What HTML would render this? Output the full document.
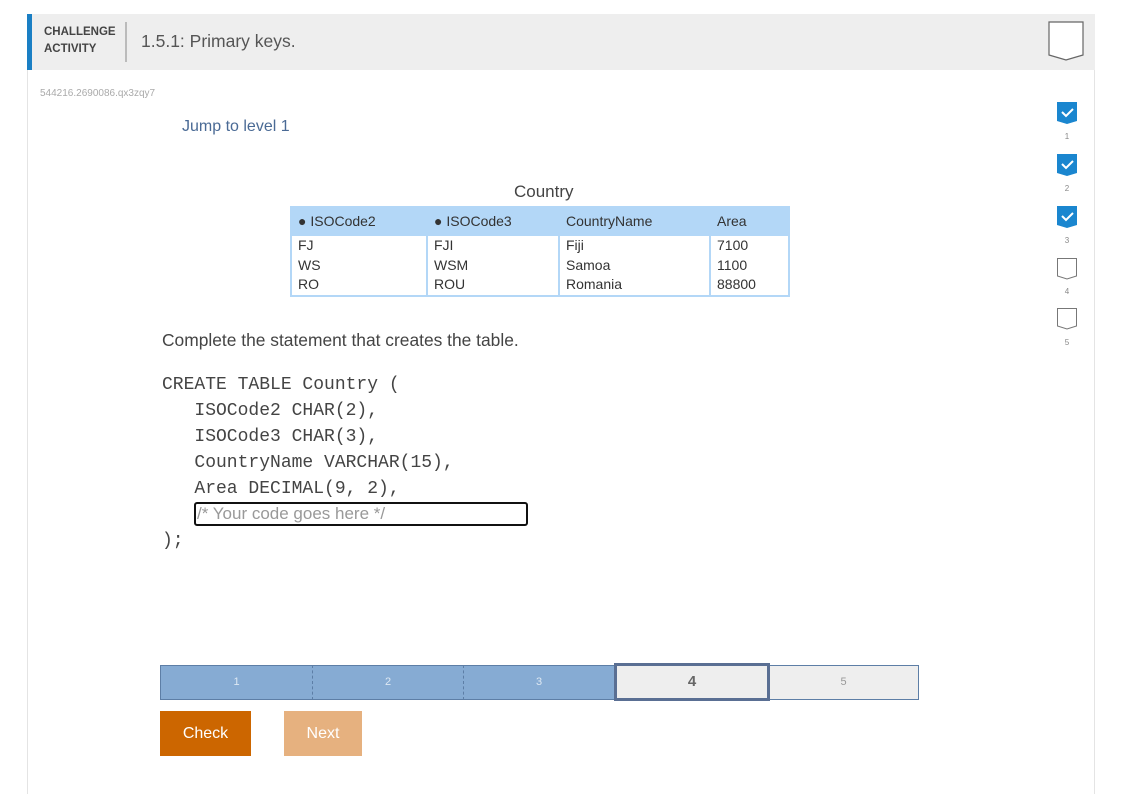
<!DOCTYPE html>
<html><head><style>
body{margin:0;width:1126px;height:776px;background:#fff;font-family:"Liberation Sans",sans-serif;position:relative;overflow:hidden}
.card{position:absolute;left:27px;top:14px;width:1068px;height:780px;border-left:1px solid #e4e4e4;border-right:1px solid #e4e4e4;box-sizing:border-box}
.hdr{position:absolute;left:27px;top:14px;width:1068px;height:56px;background:#eee}
.bar{position:absolute;left:27px;top:14px;width:5px;height:56px;background:#1a7fc4}
.abs{position:absolute}
.code{position:absolute;left:162px;font-family:"Liberation Mono",monospace;font-size:18px;color:#444;white-space:pre}
table{position:absolute;left:290px;top:206px;border-collapse:collapse;font-size:14px;color:#333}
td{border:2px solid #b3d7f7;padding:0 6px;vertical-align:top;line-height:19.5px}
.seg{position:absolute;top:665px;height:35px;box-sizing:border-box;text-align:center;line-height:33px;font-size:11px;color:#dde8f3}
</style></head><body>
<div class="card"></div>
<div class="hdr"></div><div class="bar"></div>
<div class="abs" style="left:44px;top:24px;font-size:11.5px;font-weight:bold;color:#444;line-height:17px">CHALLENGE<br>ACTIVITY</div>
<div class="abs" style="left:125px;top:22px;width:2px;height:40px;background:#bbb"></div>
<div class="abs" style="left:141px;top:31px;font-size:17.5px;color:#555">1.5.1: Primary keys.</div>
<svg class="abs" style="left:1048px;top:21px" width="37" height="41"><path d="M1 1H35V34L18 39L1 34Z" fill="#fff" stroke="#666" stroke-width="1.2"/></svg>
<div class="abs" style="left:40px;top:88px;font-size:10px;color:#aaa">544216.2690086.qx3zqy7</div>
<div class="abs" style="left:182px;top:118px;font-size:16px;color:#4a6a95">Jump to level 1</div>
<div class="abs" style="left:514px;top:182px;font-size:17px;color:#444">Country</div>
<table>
<tr style="background:#b3d7f7;height:28px"><td style="width:122px;line-height:26px">● ISOCode2</td><td style="width:118px;line-height:26px">● ISOCode3</td><td style="width:137px;line-height:26px">CountryName</td><td style="width:65px;line-height:26px">Area</td></tr>
<tr><td>FJ<br>WS<br>RO</td><td>FJI<br>WSM<br>ROU</td><td>Fiji<br>Samoa<br>Romania</td><td>7100<br>1100<br>88800</td></tr>
</table>
<div class="abs" style="left:162px;top:330px;font-size:17.4px;color:#444">Complete the statement that creates the table.</div>
<div class="code" style="top:375px">CREATE TABLE Country (</div>
<div class="code" style="top:401px">   ISOCode2 CHAR(2),</div>
<div class="code" style="top:427px">   ISOCode3 CHAR(3),</div>
<div class="code" style="top:453px">   CountryName VARCHAR(15),</div>
<div class="code" style="top:479px">   Area DECIMAL(9, 2),</div>
<div class="abs" style="left:194px;top:502px;width:334px;height:24px;border:2px solid #111;border-radius:3px;box-sizing:border-box;font-size:17px;color:#999;line-height:20px;padding-left:1px">/* Your code goes here */</div>
<div class="code" style="top:531px">);</div>
<div class="seg" style="left:160px;width:153px;background:#86abd3;border:1px solid #5d7ea6;border-right:1px dashed #5d7ea6">1</div>
<div class="seg" style="left:313px;width:151px;background:#86abd3;border-top:1px solid #5d7ea6;border-bottom:1px solid #5d7ea6;border-right:1px dashed #5d7ea6">2</div>
<div class="seg" style="left:464px;width:150px;background:#86abd3;border-top:1px solid #5d7ea6;border-bottom:1px solid #5d7ea6">3</div>
<div class="seg" style="left:769px;width:150px;background:#eee;border:1px solid #5d7ea6;border-left:none;color:#999">5</div>
<div class="seg" style="left:614px;width:156px;top:663px;height:38px;background:#eee;border:3px solid #5a6f93;color:#666;font-size:15px;font-weight:bold;line-height:32px">4</div>
<div class="abs" style="left:160px;top:711px;width:91px;height:45px;background:#cc6600;color:#fff;font-size:16px;text-align:center;line-height:45px">Check</div>
<div class="abs" style="left:284px;top:711px;width:78px;height:45px;background:#e6b17f;color:#fff;font-size:16px;text-align:center;line-height:45px">Next</div>
<svg class="abs" style="left:1055px;top:100px" width="26" height="260">
<g fill="#1a86cf"><path d="M2 2H22V21L12 24L2 21Z"/><path d="M2 54H22V73L12 76L2 73Z"/><path d="M2 106H22V125L12 128L2 125Z"/></g>
<g fill="none" stroke="#fff" stroke-width="2"><path d="M7 12L11 16L18 9"/><path d="M7 64L11 68L18 61"/><path d="M7 116L11 120L18 113"/></g>
<g fill="#fff" stroke="#777"><path d="M2.5 158.5H21.5V176L12 179L2.5 176Z"/><path d="M2.5 208.5H21.5V226L12 229L2.5 226Z"/></g>
<g font-size="8" fill="#888" text-anchor="middle" font-family="Liberation Sans"><text x="12" y="39">1</text><text x="12" y="91">2</text><text x="12" y="143">3</text><text x="12" y="194">4</text><text x="12" y="245">5</text></g>
</svg>
</body></html>
